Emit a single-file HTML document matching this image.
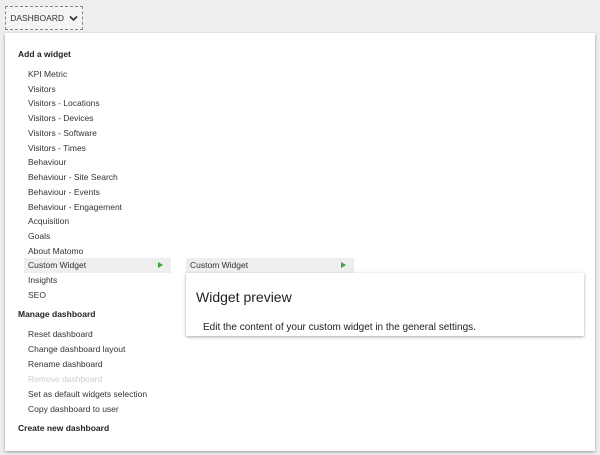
<!DOCTYPE html><html><head><style>
body{margin:0;width:600px;height:455px;background:#eeeeee;font-family:"Liberation Sans",sans-serif;position:relative;overflow:hidden;color:#222}
.a{position:absolute;white-space:nowrap}
.btn{left:5px;top:6px;width:78px;height:24px;border:1px dashed #888;background:#f4f4f4;font-size:8.5px;line-height:23px;text-align:center;color:#333;box-sizing:border-box}
.panel{left:5px;top:33px;width:590px;height:418px;background:#fff;box-shadow:0 1px 3px rgba(0,0,0,.35)}
.h{font-weight:bold;font-size:8.5px;left:18px}
.i{font-size:8.5px;left:28px;color:#333}
.hl{background:#eeeeee;height:15px}
.tri{width:0;height:0;border-left:5px solid #3aa53a;border-top:3.5px solid transparent;border-bottom:3.5px solid transparent}
</style></head><body>
<div class="a btn">DASHBOARD&nbsp; <svg width="9" height="7" viewBox="0 0 9 7" style="vertical-align:middle"><path d="M1 1.5 L4.5 5 L8 1.5" stroke="#333" stroke-width="1.6" fill="none"/></svg></div>
<div class="a panel"></div>
<div class="a h" style="top:49px">Add a widget</div>
<div class="a hl" style="left:24px;top:258px;width:147px"></div>
<div class="a tri" style="left:158px;top:262px"></div>
<div class="a hl" style="left:186px;top:258px;width:168px"></div>
<div class="a tri" style="left:341px;top:262px"></div>
<div class="a i" style="top:69px">KPI Metric</div>
<div class="a i" style="top:84px">Visitors</div>
<div class="a i" style="top:98px">Visitors - Locations</div>
<div class="a i" style="top:113px">Visitors - Devices</div>
<div class="a i" style="top:128px">Visitors - Software</div>
<div class="a i" style="top:143px">Visitors - Times</div>
<div class="a i" style="top:157px">Behaviour</div>
<div class="a i" style="top:172px">Behaviour - Site Search</div>
<div class="a i" style="top:187px">Behaviour - Events</div>
<div class="a i" style="top:202px">Behaviour - Engagement</div>
<div class="a i" style="top:216px">Acquisition</div>
<div class="a i" style="top:231px">Goals</div>
<div class="a i" style="top:246px">About Matomo</div>
<div class="a i" style="top:260px">Custom Widget</div>
<div class="a i" style="top:275px">Insights</div>
<div class="a i" style="top:290px">SEO</div>
<div class="a i" style="left:190px;top:260px">Custom Widget</div>
<div class="a" style="left:186px;top:273px;width:398px;height:63px;background:#fff;box-shadow:0 1px 3px rgba(0,0,0,.35)"></div>
<div class="a" style="left:196px;top:289px;font-size:14px;color:#222">Widget preview</div>
<div class="a" style="left:203px;top:322px;font-size:10px;color:#222">Edit the content of your custom widget in the general settings.</div>
<div class="a h" style="top:309px">Manage dashboard</div>
<div class="a i" style="top:329px">Reset dashboard</div>
<div class="a i" style="top:344px">Change dashboard layout</div>
<div class="a i" style="top:359px">Rename dashboard</div>
<div class="a i" style="top:374px;color:#ccc">Remove dashboard</div>
<div class="a i" style="top:389px">Set as default widgets selection</div>
<div class="a i" style="top:404px">Copy dashboard to user</div>
<div class="a h" style="top:423px">Create new dashboard</div>
</body></html>
